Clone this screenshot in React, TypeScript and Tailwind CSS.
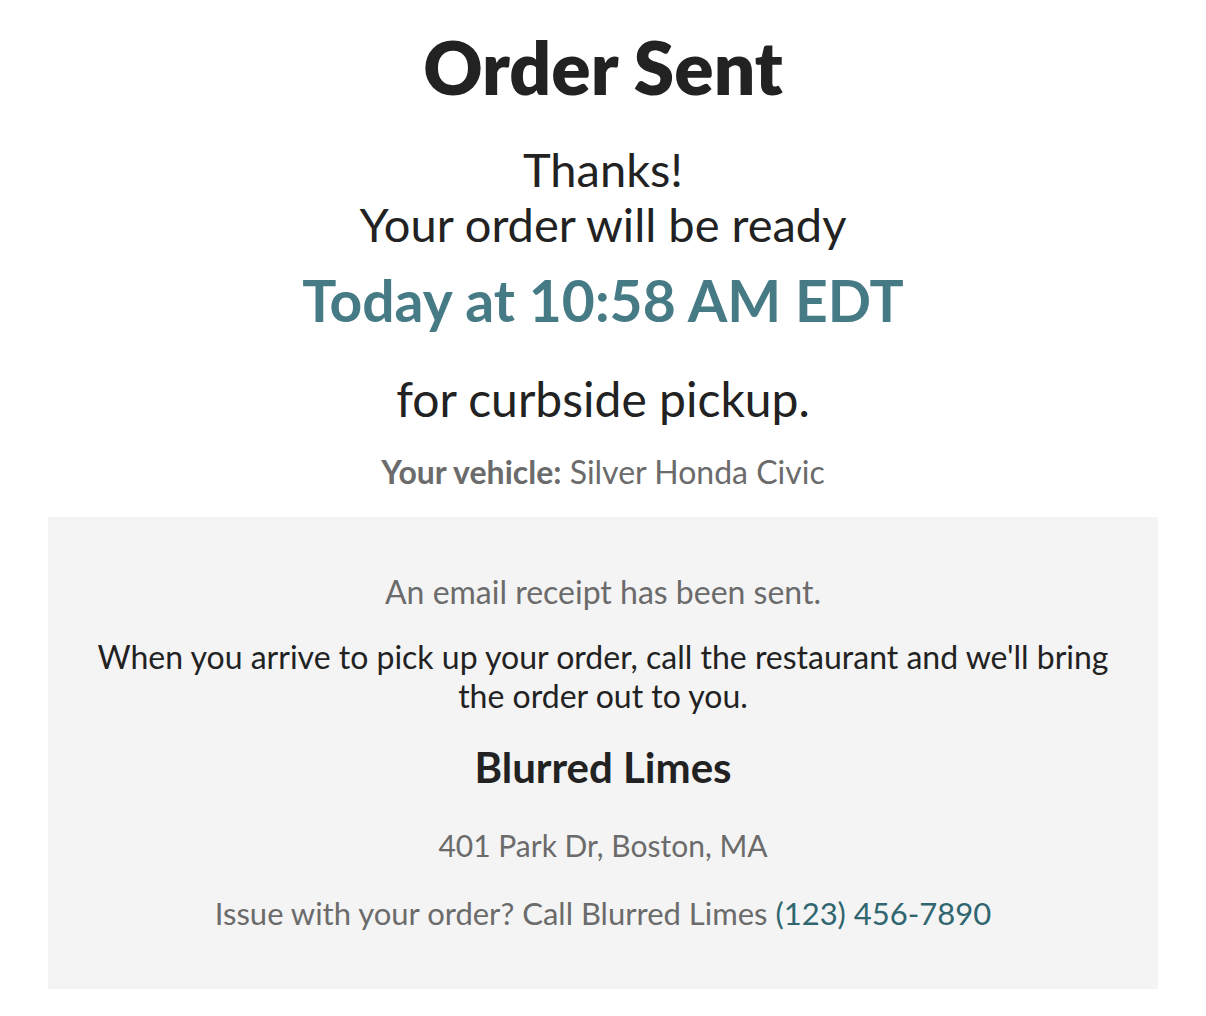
export default function App() {
  return (
    <div className="min-h-screen bg-white pt-[27px] font-['Lato',sans-serif] text-[#222222] flex flex-col items-center text-center">
      {/* Header */}
      <h1 className="text-[73px] leading-[80px] font-extrabold">Order Sent</h1>

      <div className="mt-[35px] text-[47px] leading-[55px]">
        <p>Thanks!</p>
        <p>Your order will be ready</p>
      </div>

      <p className="mt-[12px] text-[57px] leading-[72px] font-bold text-[#467b86]">Today at 10:58 AM EDT</p>

      <p className="mt-[35px] text-[48px] leading-[56px]">for curbside pickup.</p>

      <p className="mt-[25px] text-[32px] leading-[40px] text-[#6b6b6b]">
        <span className="font-bold">Your vehicle:</span> Silver Honda Civic
      </p>

      {/* Info box */}
      <div className="mt-[25px] w-[1110px] bg-[#f4f4f4] px-[40px] pt-[55px] pb-[56px] flex flex-col items-center">
        <p className="text-[32px] leading-[40px] text-[#6b6b6b]">An email receipt has been sent.</p>
        <p className="mt-[25px] text-[32px] leading-[39px] text-[#222222]">
          When you arrive to pick up your order, call the restaurant and we'll bring the order out to you.
        </p>
        <h2 className="mt-[28px] text-[42px] leading-[48px] font-bold text-[#222222]">Blurred Limes</h2>
        <p className="mt-[34px] text-[30px] leading-[40px] text-[#6b6b6b]">401 Park Dr, Boston, MA</p>
        <p className="mt-[28px] text-[31px] leading-[40px] text-[#6b6b6b]">
          Issue with your order? Call Blurred Limes <a className="text-[#2f6670]">(123) 456-7890</a>
        </p>
      </div>
    </div>
  );
}
